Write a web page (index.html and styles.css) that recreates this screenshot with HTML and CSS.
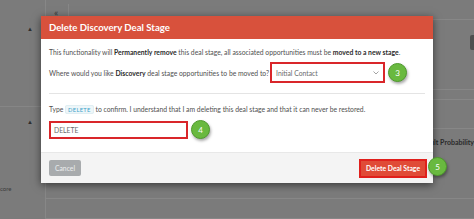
FILE: index.html
```html
<!DOCTYPE html>
<html>
<head>
    <meta charset="utf-8">
    <title>Delete Discovery Deal Stage</title>
    <link rel="stylesheet" href="styles.css">
</head>
<body>
    <!-- page behind the overlay -->
    <div class="page">
        <div class="sidebar">
            <div class="side-section"><span class="caret">&#9650;</span></div>
            <div class="side-section">
                <span class="caret">&#9650;</span>
                <span class="side-label">core</span>
            </div>
        </div>
        <div class="main">
            <div class="toolbar"><span class="collapse">&laquo;</span></div>
            <div class="row row-tall"><span class="dark-btn"></span></div>
            <div class="row row-thin"></div>
            <div class="row row-mid"></div>
            <div class="row row-prob"><span class="col-label">Default Probability</span></div>
            <div class="row"></div>
        </div>
    </div>

    <!-- modal -->
    <div class="modal">
        <div class="modal-header">Delete Discovery Deal Stage</div>
        <div class="modal-body">
            <p class="line">This functionality will <b>Permanently remove</b> this deal stage, all associated opportunities must be <b>moved to a new stage</b>.</p>
            <div class="field-row">
                <span class="line">Where would you like <b>Discovery</b> deal stage opportunities to be moved to?</span>
                <div class="select highlight">
                    <span>Initial Contact</span>
                    <svg class="chevron" width="6" height="4" viewBox="0 0 6 4"><path d="M0.5 0.5 L3 3 L5.5 0.5" fill="none" stroke="#999" stroke-width="0.9"/></svg>
                </div>
                <span class="step">3</span>
            </div>
            <hr class="divider">
            <p class="line">Type <code>DELETE</code> to confirm. I understand that I am deleting this deal stage and that it can never be restored.</p>
            <div class="field-row">
                <div class="input highlight">DELETE</div>
                <span class="step">4</span>
            </div>
        </div>
        <div class="modal-footer">
            <button class="btn btn-cancel">Cancel</button>
            <button class="btn btn-delete">Delete Deal Stage</button>
        </div>
        <span class="step step-float">5</span>
    </div>
</body>
</html>
```

FILE: styles.css
```css
* {
    margin: 0;
    padding: 0;
    box-sizing: border-box;
    font-family: Lato, "Open Sans", sans-serif;
}

body {
    width: 474px;
    height: 219px;
    overflow: hidden;
    background-color: #7b7b7b;
    position: relative;
}

/* Page behind the overlay */
.page {
    display: flex;
    height: 219px;
}

.sidebar {
    width: 46px;
    border-right: 1px solid #878787;
    display: flex;
    flex-direction: column;
}

.side-section {
    height: 107px;
    border-bottom: 1px solid #868686;
    padding: 25px 0 0 27px;
}

.side-section:last-child {
    flex: 1;
    border-bottom: none;
    padding-top: 11px;
}

.caret {
    display: block;
    font-size: 6px;
    line-height: 8px;
    color: #2e2e2e;
}

.side-label {
    display: block;
    margin: 59px 0 0 -27px;
    font-size: 6px;
    line-height: 8px;
    color: #3c3c3c;
}

.main {
    flex: 1;
    display: flex;
    flex-direction: column;
}

.toolbar {
    height: 20px;
    border-bottom: 1px solid #878787;
}

.collapse {
    display: inline-block;
    width: 23px;
    height: 19px;
    padding: 3px 0 0 8px;
    border-right: 1px solid #878787;
    font-size: 10px;
    line-height: 10px;
    color: #3a3a3a;
}

.row {
    border-bottom: 1px solid #878787;
    display: flex;
    justify-content: flex-end;
    height: 20px;
}

.row-tall {
    height: 70px;
    padding-top: 15px;
}

.row-thin {
    height: 10px;
}

.row-mid {
    height: 30px;
}

.row-prob {
    height: 70px;
    padding-top: 8px;
}

.dark-btn {
    width: 10px;
    height: 15px;
    margin-right: -6px;
    background-color: #4f4f4f;
    border-radius: 2px;
}

.col-label {
    font-size: 7px;
    line-height: 10px;
    font-weight: bold;
    color: #2a2a2a;
    white-space: nowrap;
    margin-right: 0;
}

/* Modal */
.modal {
    position: absolute;
    left: 41px;
    top: 16px;
    width: 392px;
    height: 167px;
    background-color: #fff;
    box-shadow: 0 2px 8px rgba(0, 0, 0, 0.55);
    display: flex;
    flex-direction: column;
}

.modal-header {
    height: 23px;
    background-color: #d8513c;
    color: #fff;
    font-size: 9.6px;
    font-weight: bold;
    line-height: 23px;
    padding-left: 8px;
}

.modal-body {
    flex: 1;
    padding: 8px 8px 0;
}

.line {
    font-size: 6.8px;
    line-height: 10px;
    color: #505050;
}

.line b {
    color: #2b2b2b;
}

.field-row {
    display: flex;
    align-items: center;
    margin-top: 5px;
}

.field-row .line {
    margin-right: 1px;
}

.highlight {
    border: 2px solid #d9262a;
    background-color: #fff;
    color: #6b6b6b;
    font-size: 6.8px;
}

.select {
    width: 115px;
    height: 21px;
    display: flex;
    align-items: center;
    justify-content: space-between;
    padding: 0 4px 0 4px;
}

.chevron {
    display: block;
}

.divider {
    border: none;
    border-top: 1px solid #e4e4e4;
    margin: 10px 0 10px;
}

code {
    font-family: Lato, sans-serif;
    font-size: 5.8px;
    letter-spacing: 0.3px;
    color: #3ba2c9;
    background-color: #eef6f9;
    border: 1px solid #e0eef2;
    border-radius: 2px;
    padding: 0 2px;
}

.input {
    width: 139px;
    height: 18px;
    line-height: 14px;
    padding-left: 3px;
}

.step {
    width: 19px;
    height: 19px;
    border-radius: 50%;
    background-color: #69b93f;
    border: 1px solid #4e9a2c;
    box-shadow: 1px 2px 3px rgba(0, 0, 0, 0.35);
    color: #fff;
    font-size: 8px;
    display: flex;
    align-items: center;
    justify-content: center;
    margin-left: 3px;
}

.step-float {
    position: absolute;
    left: 387px;
    top: 141px;
    margin: 0;
}

.modal-footer {
    height: 31px;
    background-color: #f4f4f4;
    border-top: 1px solid #e8e8e8;
    display: flex;
    align-items: center;
    justify-content: space-between;
    padding: 0 6px 0 8px;
}

.btn {
    border: none;
    color: #fff;
    font-size: 6.8px;
    border-radius: 2px;
}

.btn-cancel {
    width: 32px;
    height: 16px;
    background-color: #a8abad;
    color: #eceeef;
}

.btn-delete {
    width: 68px;
    height: 19px;
    background-color: #e04b37;
    border: 2px solid #e0201c;
    border-radius: 0;
    font-weight: bold;
}
```
